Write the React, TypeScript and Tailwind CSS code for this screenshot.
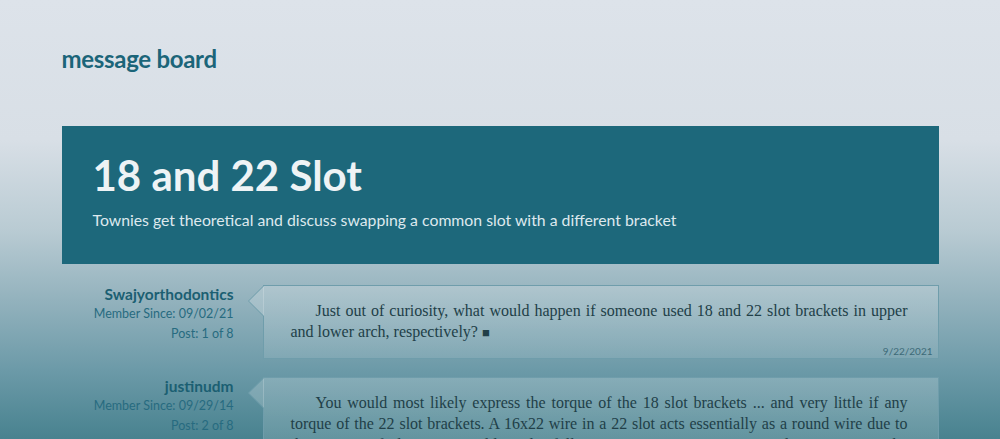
import React from 'react';

type Post = {
  author: string;
  since: string;
  index: number;
  body: React.ReactNode;
  date: string;
};

const posts: Post[] = [
  {
    author: 'Swajyorthodontics',
    since: '09/02/21',
    index: 1,
    body: (
      <>
        Just out of curiosity, what would happen if someone used 18 and 22 slot brackets in upper
        and lower arch, respectively? <span className="text-[13px]">■</span>
      </>
    ),
    date: '9/22/2021',
  },
  {
    author: 'justinudm',
    since: '09/29/14',
    index: 2,
    body: (
      <>
        You would most likely express the torque of the 18 slot brackets ... and very little if any
        torque of the 22 slot brackets. A 16x22 wire in a 22 slot acts essentially as a round wire due to
        the amount of play. You would need a full size 21x25 wire to get any real expression in the
        lower arch.
      </>
    ),
    date: '9/23/2021',
  },
];

const sans = "font-['Lato','Noto_Sans',sans-serif]";

const PostRow: React.FC<{ post: Post }> = ({ post }) => (
  <div className="flex items-start">
    {/* Author */}
    <div className={`w-[172px] shrink-0 text-right ${sans}`}>
      <div className="text-[15.5px] leading-[19px] font-bold text-[#1b5f72]">{post.author}</div>
      <div className="text-[12.5px] leading-[20px] text-[#276b80]">Member Since: {post.since}</div>
      <div className="text-[12.5px] leading-[20px] text-[#276b80]">Post: {post.index} of 8</div>
    </div>

    {/* Bubble */}
    <div className="relative ml-[29px] flex-1 border-y border-r border-[#6f9dab] bg-[linear-gradient(to_bottom,rgba(255,255,255,0.2),rgba(255,255,255,0.1))]">
      <div className="absolute left-0 top-[30px] bottom-0 w-px bg-[#6f9dab]" />
      <svg
        className="absolute -left-[15px] -top-px"
        width="16"
        height="32"
        viewBox="0 0 16 32"
      >
        <polygon points="16,1 0.5,16 16,31" fill="rgba(255,255,255,0.2)" />
        <polyline points="16,0.5 0.5,16 16,31.5" fill="none" stroke="#6f9dab" strokeWidth="1" />
      </svg>
      <p className="pt-[14px] pl-[28px] pr-[30px] indent-[25px] text-justify font-['Liberation_Serif',serif] text-[16px] leading-[21px] text-[#213f48]">
        {post.body}
      </p>
      <div className={`pr-[5px] pt-[2px] pb-[1px] text-right text-[10px] leading-[12px] text-[#3d6a78] ${sans}`}>
        {post.date}
      </div>
    </div>
  </div>
);

export default function App() {
  return (
    <div className="min-h-screen bg-[linear-gradient(to_bottom,#dde3ea_0px,#d8dfe6_140px,#b9cbd3_230px,#93b2bd_300px,#6c9aa8_370px,#48828f_439px,#3a7382_700px)]">
      <div className="mx-auto w-[877px] pt-[43px] pb-10">
        <h1 className={`${sans} text-[24px] leading-[32px] font-bold tracking-[-0.3px] text-[#1b6579]`}>
          message board
        </h1>

        <div className="mt-[51px] h-[138px] bg-[#1d687b] pl-[31px] pt-[23px]">
          <h2 className={`${sans} text-[42px] leading-[52px] font-bold text-[#eef3f5]`}>18 and 22 Slot</h2>
          <p className={`${sans} mt-[9px] text-[15.8px] leading-[20px] text-[#dde9ee]`}>
            Townies get theoretical and discuss swapping a common slot with a different bracket
          </p>
        </div>

        <div className="mt-[21px] flex flex-col gap-[18px]">
          {posts.map((p) => (
            <PostRow key={p.index} post={p} />
          ))}
        </div>
      </div>
    </div>
  );
}
